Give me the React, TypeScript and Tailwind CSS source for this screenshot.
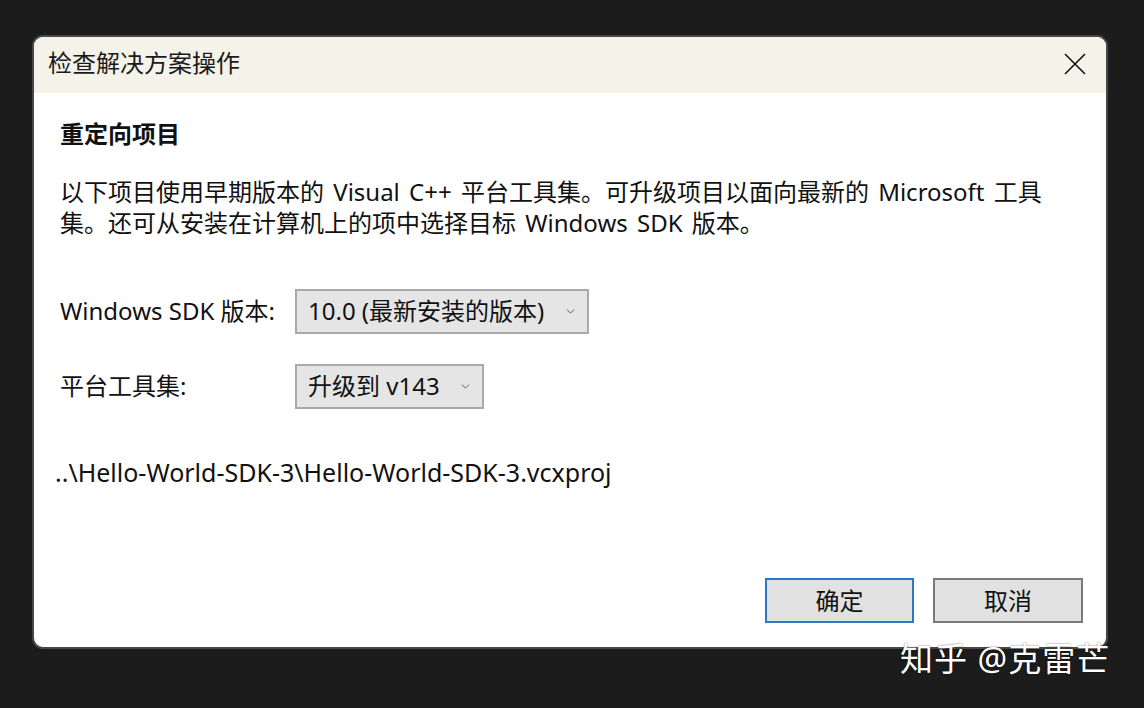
import { ChevronDown } from 'lucide-react';

const FONT = { fontFamily: '"Noto Sans", "Noto Sans CJK SC", sans-serif' };

function Select({ value, width }: { value: string; width: string }) {
  return (
    <div
      className={`${width} h-[45px] flex items-center justify-between pl-[11px] pr-[10px] bg-[#e5e5e5] border-2 border-[#a9a9a9] text-[24px] text-[#111]`}
    >
      <span className="whitespace-nowrap leading-none -mt-[2px]">{value}</span>
      <ChevronDown className="size-[13px] text-[#5a5a5a]" strokeWidth={1.8} />
    </div>
  );
}

export default function App() {
  return (
    <div className="relative w-[1144px] h-[708px] bg-[#1c1c1c] pt-[35px] pl-[32px]" style={FONT}>
      <div className="w-[1076px] h-[614px] rounded-[11px] border-2 border-[#474747] overflow-hidden flex flex-col bg-white">
        {/* 标题栏 */}
        <div className="h-[56px] bg-[#f5f2e9] flex items-center justify-between pl-[14px] pr-[20px]">
          <span className="text-[24px] text-[#1a1a1a] leading-none -mt-[5px]">检查解决方案操作</span>
          <svg width="22" height="22" viewBox="0 0 22 22" className="text-[#111] -mt-[2px]">
            <path d="M1 1 L21 21 M21 1 L1 21" stroke="currentColor" strokeWidth="1.6" fill="none" />
          </svg>
        </div>

        {/* 内容 */}
        <div className="flex-1 flex flex-col pl-[26px] pr-[23px] text-[#111]">
          <h1 className="mt-[25px] text-[24px] leading-[32px] font-bold">重定向项目</h1>
          <p className="mt-[26px] text-[24px] leading-[31px] whitespace-nowrap [word-spacing:3px]">
            以下项目使用早期版本的 Visual C++ 平台工具集。可升级项目以面向最新的 Microsoft 工具
            <br />
            集。还可从安装在计算机上的项中选择目标 Windows SDK 版本。
          </p>

          <div className="mt-[51px] flex items-center">
            <span className="w-[235px] text-[24px] leading-[32px] -mt-[2px]">Windows SDK 版本:</span>
            <Select value="10.0 (最新安装的版本)" width="w-[294px]" />
          </div>
          <div className="mt-[30px] flex items-center">
            <span className="w-[235px] text-[24px] leading-[32px] -mt-[2px]">平台工具集:</span>
            <Select value="升级到 v143" width="w-[189px]" />
          </div>

          <div className="mt-[48px] -ml-[5px] text-[25px] leading-[30px]">
            ..\Hello-World-SDK-3\Hello-World-SDK-3.vcxproj
          </div>

          <div className="mt-auto mb-[24px] flex justify-end gap-[19px]">
            <button className="w-[149px] h-[45px] bg-[#e1e1e1] border-2 border-[#2a78c6] text-[24px]">确定</button>
            <button className="w-[150px] h-[45px] bg-[#e1e1e1] border-2 border-[#7a7a7a] text-[24px]">取消</button>
          </div>
        </div>
      </div>

      {/* 水印 */}
      <div className="absolute left-[900px] top-[637px] text-[33px] leading-[44px] tracking-[1px] text-white whitespace-nowrap [text-shadow:0_0_2px_rgba(0,0,0,0.6)]">
        知乎 @克雷芒
      </div>
    </div>
  );
}
